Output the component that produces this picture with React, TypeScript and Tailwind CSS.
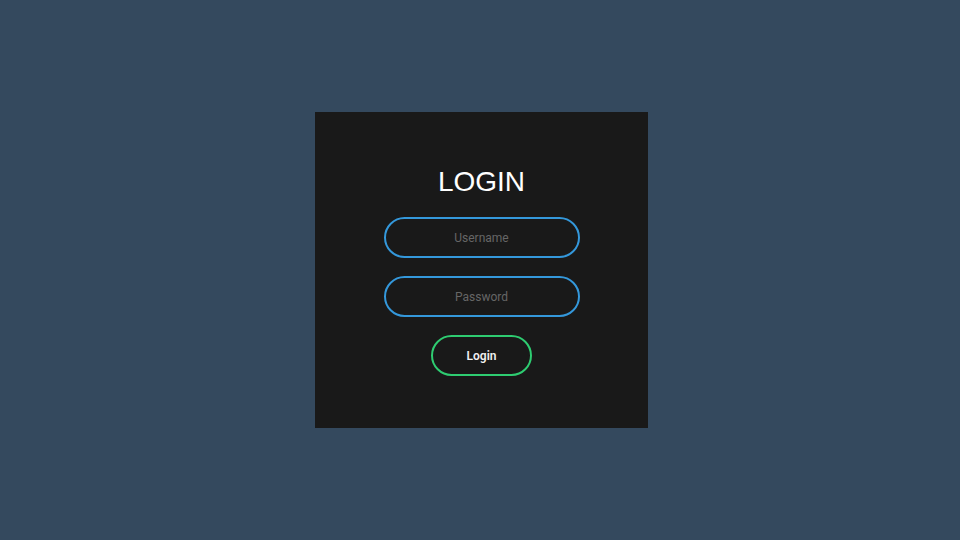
import React, { useState } from 'react';

const App: React.FC = () => {
  const [username, setUsername] = useState<string>('');
  const [password, setPassword] = useState<string>('');

  return (
    <div className="min-h-screen w-full bg-[#34495e] flex items-center justify-center">
      <form
        className="w-[333px] h-[316px] bg-[#191919] flex flex-col items-center pt-[53px] -mr-[3px]"
        onSubmit={(e) => e.preventDefault()}
      >
        {/* Title */}
        <h1 className="text-white text-[28px] leading-[34px] font-normal font-['Liberation_Sans',Arial,sans-serif]">
          LOGIN
        </h1>
        <input
          type="text"
          value={username}
          onChange={(e) => setUsername(e.target.value)}
          placeholder="Username"
          className="mt-[18px] w-[196px] h-[41px] rounded-full border-2 border-[#3498db] bg-transparent text-center text-[12px] text-white placeholder:text-[#666666] outline-none font-['Roboto',sans-serif]"
        />
        <input
          type="password"
          value={password}
          onChange={(e) => setPassword(e.target.value)}
          placeholder="Password"
          className="mt-[18px] w-[196px] h-[41px] rounded-full border-2 border-[#3498db] bg-transparent text-center text-[12px] text-white placeholder:text-[#666666] outline-none font-['Roboto',sans-serif]"
        />
        {/* Action */}
        <button
          type="submit"
          className="mt-[18px] w-[101px] h-[41px] rounded-full border-2 border-[#2ecc71] bg-transparent text-[#f0f0f0] text-[12px] font-semibold font-['Roboto',sans-serif]"
        >
          Login
        </button>
      </form>
    </div>
  );
};

export default App;
